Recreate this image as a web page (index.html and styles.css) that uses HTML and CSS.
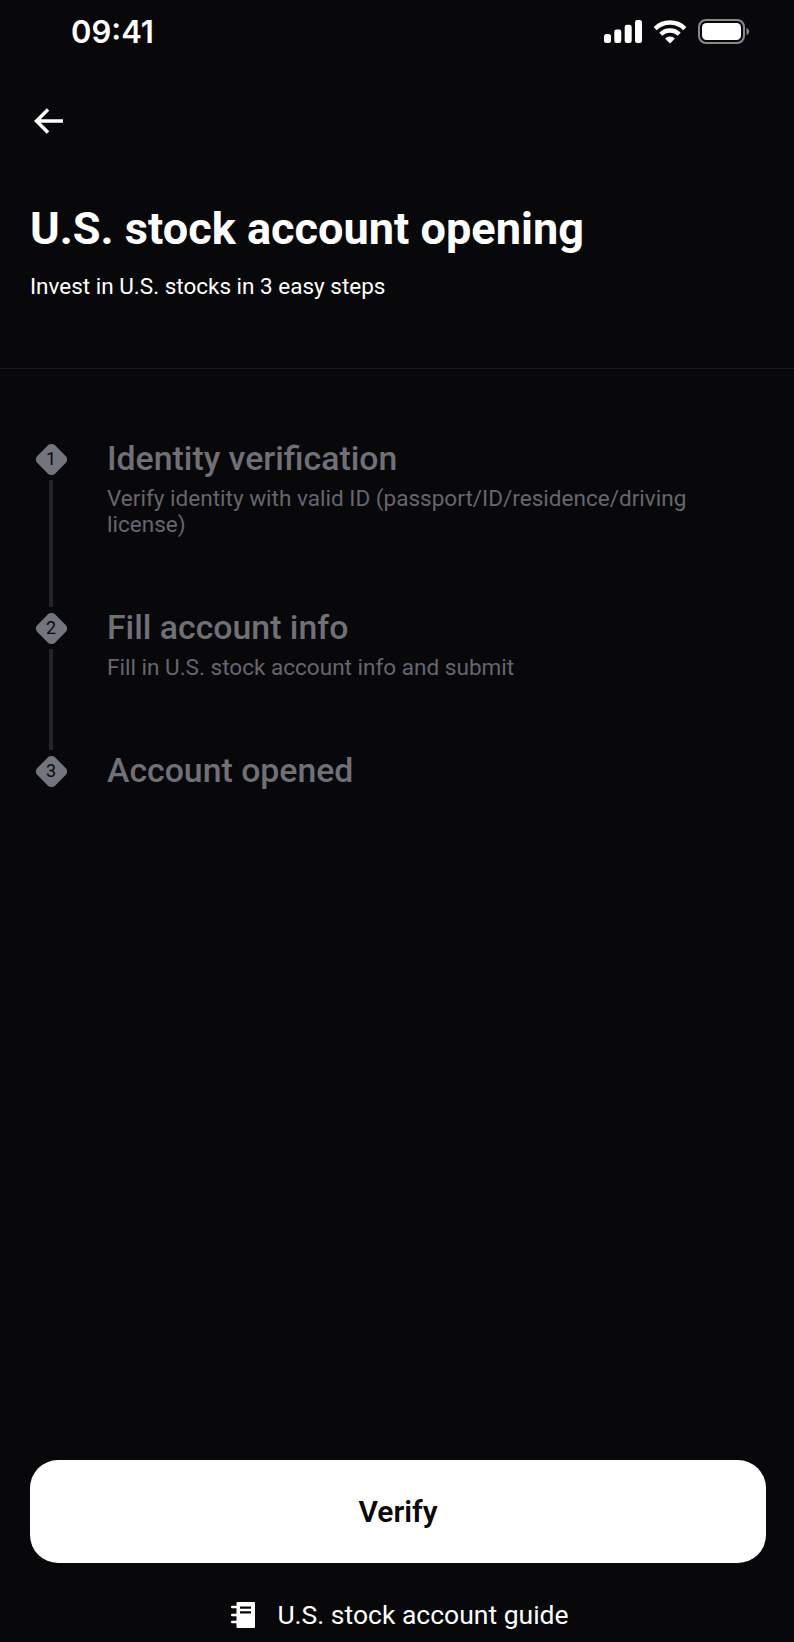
FILE: index.html
```html
<!DOCTYPE html>
<html lang="en">
<head>
<meta charset="utf-8">
<title>U.S. stock account opening</title>
<link rel="stylesheet" href="styles.css">
</head>
<body>
<div class="page">
  <div class="status">
    <span class="time">09:41</span>
    <div class="status-icons">
      <svg class="sig" width="38" height="23" viewBox="0 0 38 23"><rect x="0" y="14" width="7" height="9" rx="2.500"/><rect x="10.300" y="9.500" width="7" height="13.500" rx="2.200"/><rect x="20.700" y="4.700" width="7" height="18.300" rx="2.200"/><rect x="31" y="0" width="7" height="23" rx="2.200"/></svg>
      <svg class="wifi" width="32" height="24" viewBox="0 0 32 24"><path d="M1.150 8.650A21 21 0 0 1 30.850 8.650" fill="none" stroke="#fff" stroke-width="4.400"/><path d="M6.810 14.310A13 13 0 0 1 25.190 14.310" fill="none" stroke="#fff" stroke-width="4.400"/><path d="M16 23.500L11.050 18.550A7 7 0 0 1 20.950 18.550Z" fill="#fff"/></svg>
      <svg class="batt" width="51" height="25" viewBox="0 0 51 25"><rect x="1" y="1" width="45" height="23" rx="7" fill="none" stroke="#8a8a8c" stroke-width="2"/><rect x="4" y="4" width="39" height="17" rx="4.500" fill="#fff"/><path d="M48.500 9c1.500.4 2.500 1.800 2.500 3.500s-1 3.100-2.500 3.500z" fill="#8a8a8c"/></svg>
    </div>
  </div>
  <div class="nav">
    <svg width="30" height="26" viewBox="0 0 30 26"><path d="M29 13H3M14 1.500L2.500 13 14 24.500" fill="none" stroke="#fff" stroke-width="3.500"/></svg>
  </div>
  <header class="head">
    <h1 class="title">U.S. stock account opening</h1>
    <p class="sub">Invest in U.S. stocks in 3 easy steps</p>
  </header>
  <ol class="steps">
    <li class="step step-1">
      <div class="rail"><span class="dia"><span class="num">1</span></span><span class="line"></span></div>
      <div class="body">
        <h2 class="step-title">Identity verification</h2>
        <p class="step-desc">Verify identity with valid ID (passport/ID/residence/driving license)</p>
      </div>
    </li>
    <li class="step step-2">
      <div class="rail"><span class="dia"><span class="num">2</span></span><span class="line"></span></div>
      <div class="body">
        <h2 class="step-title">Fill account info</h2>
        <p class="step-desc">Fill in U.S. stock account info and submit</p>
      </div>
    </li>
    <li class="step step-3">
      <div class="rail"><span class="dia"><span class="num">3</span></span></div>
      <div class="body">
        <h2 class="step-title">Account opened</h2>
      </div>
    </li>
  </ol>
  <footer class="foot">
    <button class="cta">Verify</button>
    <div class="guide">
      <svg width="24" height="26" viewBox="0 0 24 26"><path fill="#fff" fill-rule="evenodd" d="M6.500 0H23a1 1 0 0 1 1 1v24a1 1 0 0 1-1 1H6.500a1 1 0 0 1-1-1v-3.800H1.200a1.200 1.200 0 0 1 0-2.400h4.300v-4.600H1.200a1.200 1.200 0 0 1 0-2.400h4.300V6.200H1.200a1.200 1.200 0 0 1 0-2.400h4.300V1a1 1 0 0 1 1-1zM9 4.600v2.100h11V4.600zM9 9.300v2.100h11V9.300z"/></svg>
      <span class="guide-text">U.S. stock account guide</span>
    </div>
  </footer>
</div>
</body>
</html>
```
FILE: styles.css
```css
* { box-sizing: border-box; margin: 0; padding: 0; }
html, body { background: #08080b; }
body { font-family: Roboto, "Noto Sans", sans-serif; color: #fff; }
.page { width: 794px; height: 1642px; display: flex; flex-direction: column; overflow: hidden; background: #08080b; }
.status { height: 63px; display: flex; justify-content: space-between; align-items: center; padding: 0 45px 0 71px; }
.time { font-family: Inter, sans-serif; font-size: 31px; font-weight: 600; line-height: 63px; }
.status-icons { display: flex; align-items: center; gap: 12px; }
.sig { fill: #fff; }
.nav { height: 79px; padding: 45px 0 0 34px; }
.head { padding: 59px 30px 0; height: 227px; border-bottom: 1px solid #1c1c1f; }
.title { font-size: 45.1px; font-weight: 700; line-height: 56px; }
.sub { font-size: 22.5px; line-height: 30px; margin-top: 14px; }
.steps { list-style: none; padding: 70px 30px 0; }
.step { display: flex; gap: 35px; }
.step-1 { height: 169px; }
.step-2 { height: 143px; }
.rail { width: 42px; display: flex; flex-direction: column; align-items: center; padding-top: 4px; flex: none; }
.dia { width: 32px; height: 32px; display: flex; align-items: center; justify-content: center; position: relative; flex: none; }
.dia::before { content: ""; position: absolute; left: 3.5px; top: 3.5px; width: 25px; height: 25px; background: #72757d; border-radius: 5px; transform: rotate(45deg); }
.num { position: relative; color: #08080b; font-size: 18px; line-height: 20px; }
.line { width: 4.5px; flex: 1; background: #252528; margin: 5px 0 1px; }
.body { flex: 1; }
.step-title { font-size: 33.8px; font-weight: 500; line-height: 40px; color: #707076; }
.step-desc { font-size: 22.55px; line-height: 26px; margin-top: 7px; color: #66666b; }
.foot { margin-top: auto; padding: 0 28px 0 30px; display: flex; flex-direction: column; }
.cta { height: 103px; border: 0; border-radius: 28px; background: #fff; color: #08080b; font: 600 30px/1 Roboto, sans-serif; }
.guide { height: 79px; padding: 24px 0 0 4px; display: flex; align-items: center; justify-content: center; gap: 22px; }
.guide-text { font-size: 26.5px; }
```
